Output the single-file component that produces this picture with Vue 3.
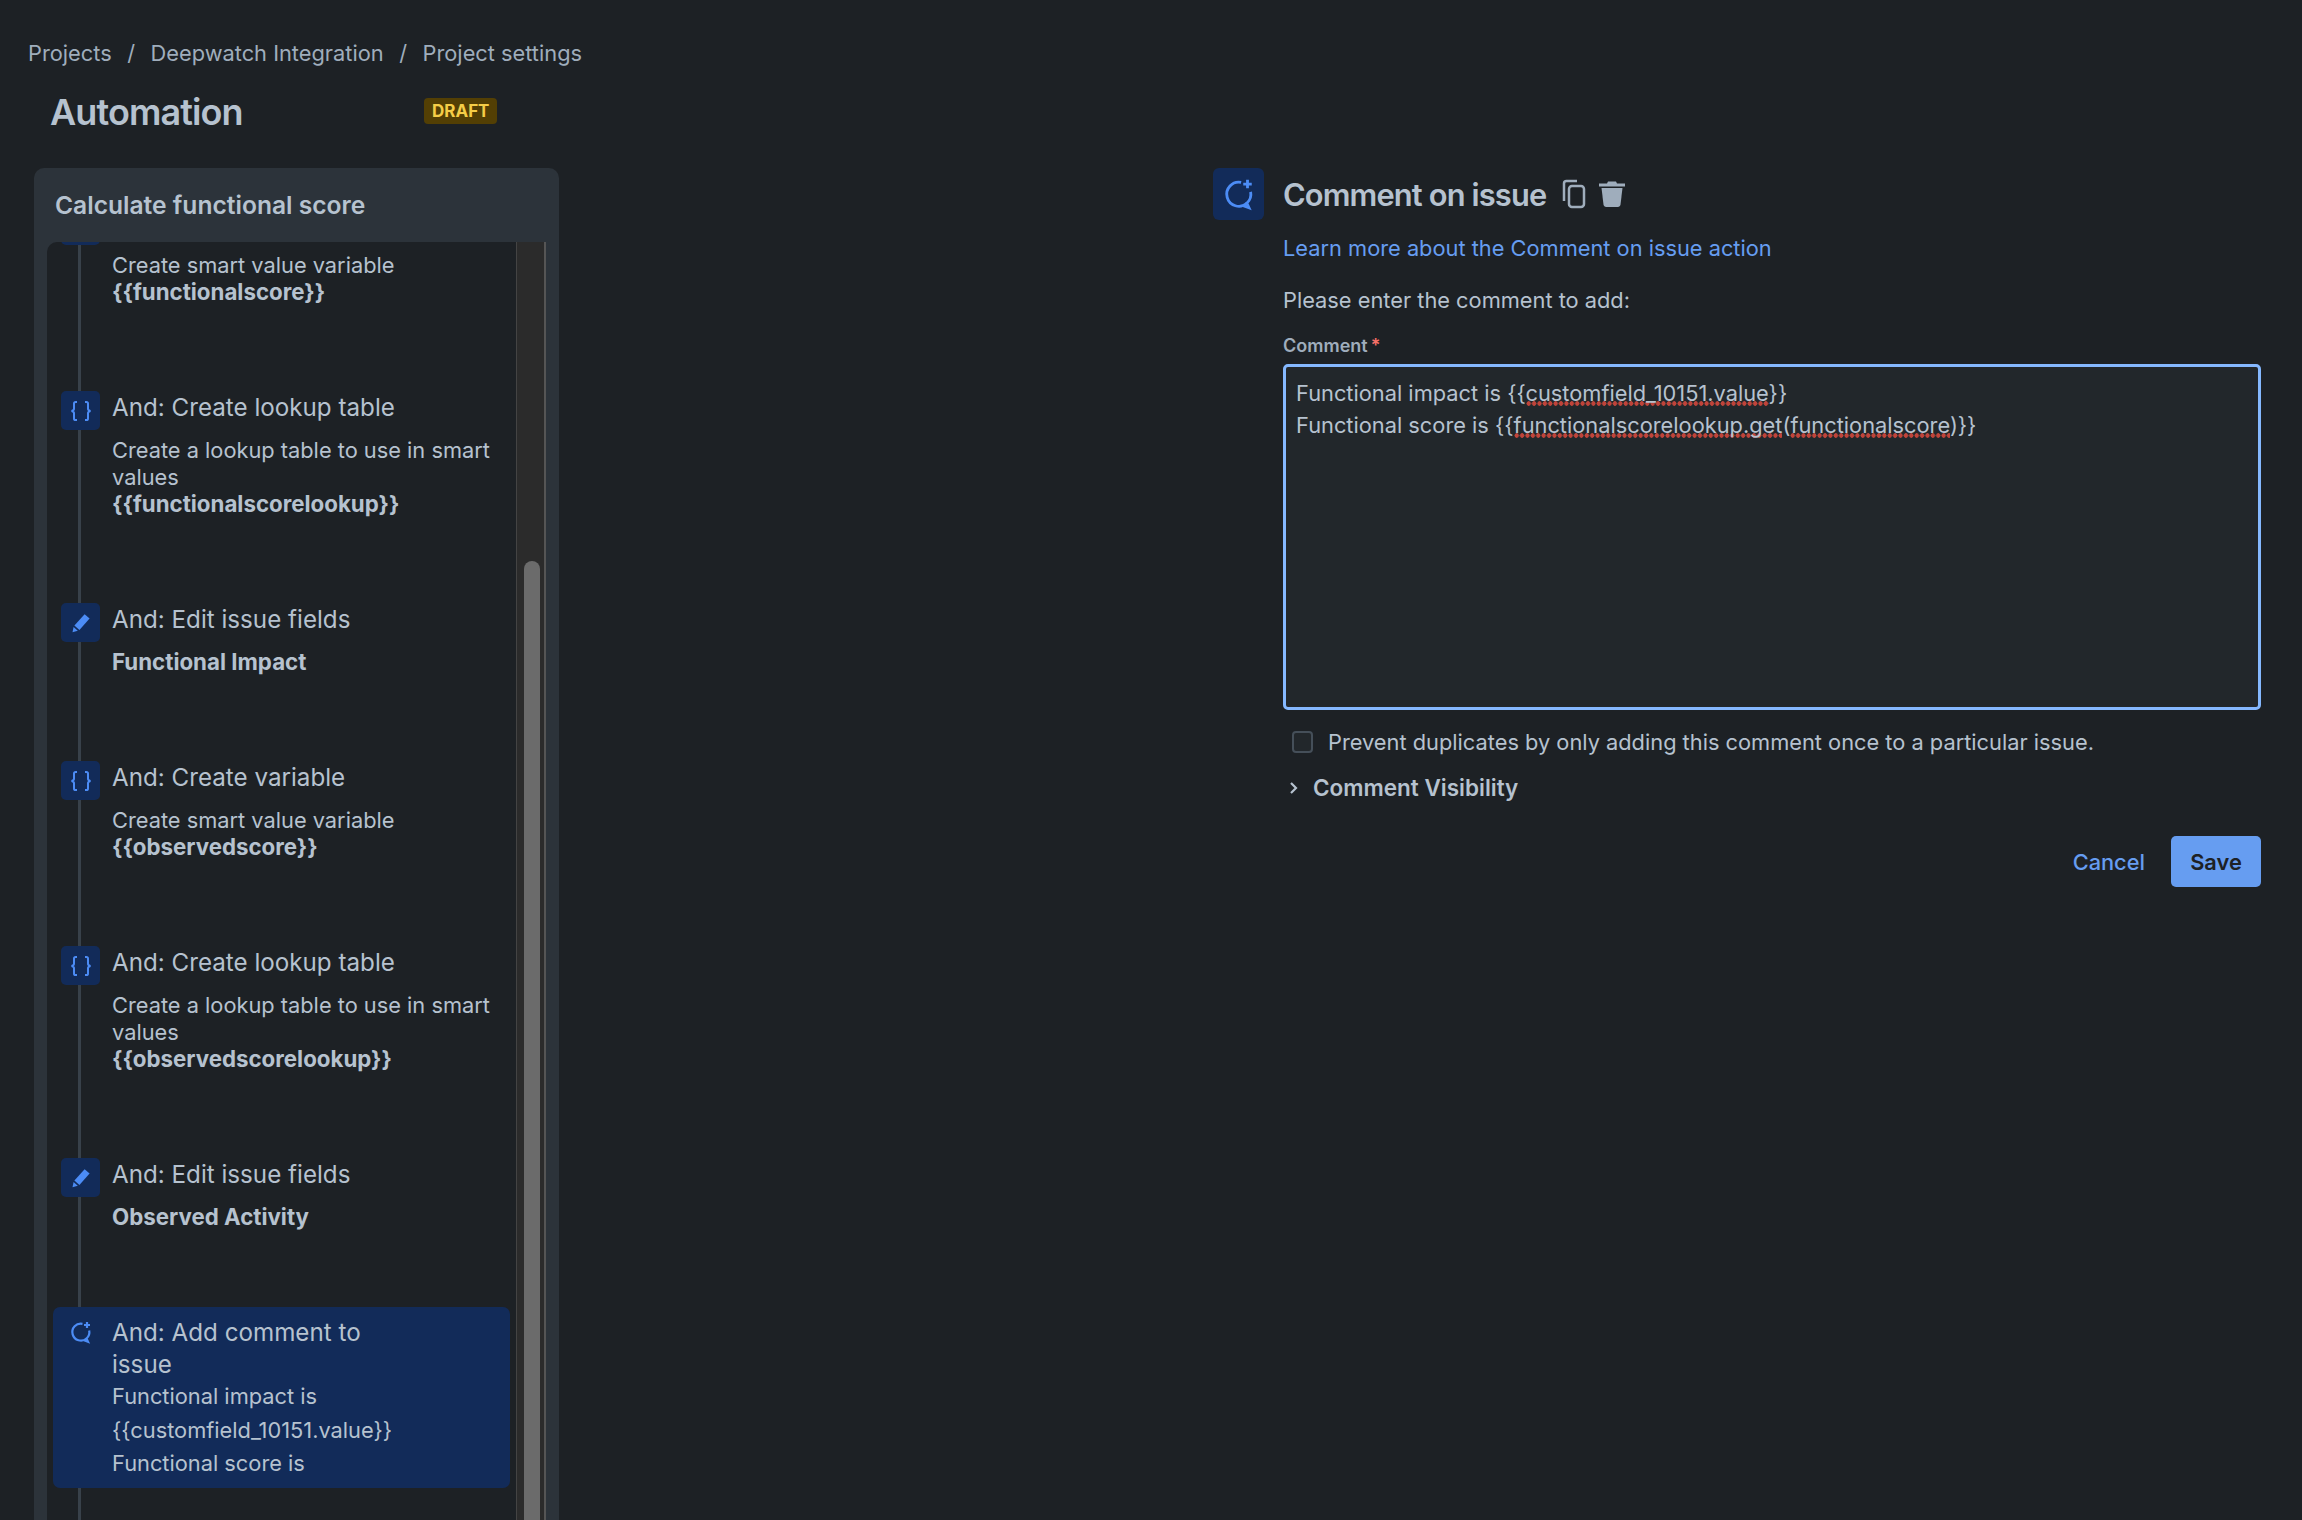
<script setup>
const rows = [
  { id: 'v1', icon: 'braces', title: '', lines: ['Create smart value variable'], bold: '{{functionalscore}}' },
  { id: 'l1', icon: 'braces', title: 'And: Create lookup table', lines: ['Create a lookup table to use in smart', 'values'], bold: '{{functionalscorelookup}}' },
  { id: 'e1', icon: 'pencil', title: 'And: Edit issue fields', lines: [], bold: 'Functional Impact' },
  { id: 'v2', icon: 'braces', title: 'And: Create variable', lines: ['Create smart value variable'], bold: '{{observedscore}}' },
  { id: 'l2', icon: 'braces', title: 'And: Create lookup table', lines: ['Create a lookup table to use in smart', 'values'], bold: '{{observedscorelookup}}' },
  { id: 'e2', icon: 'pencil', title: 'And: Edit issue fields', lines: [], bold: 'Observed Activity' }
]
</script>

<template>
  <div class="page">
    <nav class="crumbs">
      <span>Projects</span><i>/</i><span>Deepwatch Integration</span><i>/</i><span>Project settings</span>
    </nav>
    <header class="head">
      <h1>Automation</h1>
      <span class="lozenge">DRAFT</span>
    </header>
    <main class="main">
      <aside class="panel">
        <h2 class="panel-title">Calculate functional score</h2>
        <div class="panel-body">
          <div class="list">
            <div class="rail"></div>
            <div v-for="r in rows" :key="r.id" class="row">
              <div class="tile">
                <svg v-if="r.icon === 'braces'" width="22" height="22" viewBox="0 0 22 22" fill="none" stroke="#4C8CF5" stroke-width="2">
                  <path d="M7 2H5.600C4.600 2 4 2.600 4 3.600v5.100c0 1.100-.6 1.900-2.500 2.300 1.900.4 2.500 1.200 2.500 2.300v5.100c0 1 .6 1.600 1.600 1.600H7" />
                  <path d="M15 2h1.400c1 0 1.600.6 1.600 1.600v5.100c0 1.100.6 1.900 2.500 2.300-1.900.4-2.500 1.200-2.500 2.300v5.100c0 1-.6 1.600-1.600 1.600H15" />
                </svg>
                <svg v-else width="20" height="20" viewBox="0 0 20 20" fill="#4C8CF5">
                  <path d="M13.600 1.200 18.600 5.600 8.400 17 3.400 12.600Z" />
                  <path d="M2.600 14 6.800 17.800 1.500 19.200Z" />
                </svg>
              </div>
              <div class="text">
                <div class="title">{{ r.title }}</div>
                <div class="desc">
                  <div v-for="l in r.lines" :key="l">{{ l }}</div>
                  <div class="strong">{{ r.bold }}</div>
                </div>
              </div>
            </div>
            <div class="row selected">
              <div class="tile plain">
                <svg width="24" height="24" viewBox="0 0 24 24" fill="none" stroke="#4C8CF5" stroke-width="2.200">
                  <path d="M13.500 3.800A8.500 8.500 0 1 0 17.500 18.500" />
                  <path d="M20.200 10.500a8.500 8.500 0 0 1-2.700 8l1.500 3.200-4-1.500" />
                  <path d="M18 2v6M15 5h6" />
                </svg>
              </div>
              <div class="text">
                <div class="title">And: Add comment to<br />issue</div>
                <div class="desc roomy">
                  <div>Functional impact is</div>
                  <div>&#123;&#123;customfield_10151.value&#125;&#125;</div>
                  <div>Functional score is</div>
                </div>
              </div>
            </div>
            <div class="tail"></div>
          </div>
          <div class="scrollbar"><div class="thumb"></div></div>
        </div>
      </aside>

      <section class="detail">
        <div class="tile big">
          <svg width="34" height="34" viewBox="0 0 24 24" fill="none" stroke="#4C8CF5" stroke-width="2">
            <path d="M13.500 3.800A8.500 8.500 0 1 0 17.500 18.500" />
            <path d="M20.200 10.500a8.500 8.500 0 0 1-2.700 8l1.500 3.200-4-1.500" />
            <path d="M18 2v6M15 5h6" />
          </svg>
        </div>
        <div class="form">
          <div class="form-head">
            <h2>Comment on issue</h2>
            <div class="tools">
              <svg width="24" height="30" viewBox="0 0 24 30" fill="none" stroke="#9FADBC" stroke-width="2.500">
                <path d="M2 22V4.500C2 3 3 2 4.500 2H15" />
                <rect x="7" y="7" width="15" height="21" rx="3" />
              </svg>
              <svg width="28" height="28" viewBox="0 0 28 28" fill="#9FADBC">
                <path d="M10 1.500h8l1 2h8v3H1v-3h8Z" />
                <path d="M3.500 8h21l-2 16.500c-.2 1.500-1.200 2.500-2.700 2.500H8.200c-1.500 0-2.500-1-2.700-2.500Z" />
              </svg>
            </div>
          </div>
          <a class="link">Learn more about the Comment on issue action</a>
          <p class="prompt">Please enter the comment to add:</p>
          <label class="label">Comment<em>*</em></label>
          <div class="area">
            <div>Functional impact is &#123;&#123;<span class="sp">customfield_10151.value</span>&#125;&#125;</div>
            <div>Functional score is &#123;&#123;<span class="sp">functionalscorelookup.get</span>(<span class="sp">functionalscore</span>)&#125;&#125;</div>
          </div>
          <div class="check">
            <span class="box"></span>
            <span>Prevent duplicates by only adding this comment once to a particular issue.</span>
          </div>
          <div class="vis">
            <svg width="12" height="16" viewBox="0 0 12 16" fill="none" stroke="#B6C2CF" stroke-width="2.200">
              <path d="M3 3l5 5-5 5" />
            </svg>
            <span>Comment Visibility</span>
          </div>
          <div class="actions">
            <a class="cancel">Cancel</a>
            <button class="save">Save</button>
          </div>
        </div>
      </section>
    </main>
  </div>
</template>

<style>
html, body { margin: 0; background: #1d2125; }
</style>

<style scoped>
.page {
  width: 2302px;
  height: 1520px;
  overflow: hidden;
  background: #1d2125;
  color: #b6c2cf;
  font-family: Inter, "Liberation Sans", sans-serif;
  font-size: 21.800px;
  display: flex;
  flex-direction: column;
}
.crumbs {
  display: flex;
  gap: 15.500px;
  padding: 39px 0 0 28px;
  line-height: 28px;
  color: #9fadbc;
}
.crumbs i { font-style: normal; color: #9fadbc; }
.head {
  display: flex;
  align-items: center;
  padding: 17px 0 0 50px;
  height: 56px;
}
.head h1 {
  margin: 0;
  width: 374px;
  font-size: 36px;
  line-height: 44px;
  font-weight: 600;
  letter-spacing: -0.9px;
  color: #b6c2cf;
}
.lozenge {
  background: #533f04;
  color: #f5cd47;
  font-size: 17px;
  font-weight: 700;
  line-height: 26px;
  padding: 0 8px;
  margin-top: -2px;
  border-radius: 4px;
}
.main {
  flex: 1;
  min-height: 0;
  display: flex;
  justify-content: space-between;
  padding: 28px 41px 0 34px;
}
.panel {
  width: 525px;
  background: #2c333a;
  border-radius: 10px 10px 0 0;
  display: flex;
  flex-direction: column;
  padding: 0 13px;
  box-sizing: border-box;
}
.panel-title {
  margin: 0 -13px;
  padding: 0 21px;
  height: 74px;
  line-height: 74px;
  font-size: 24.600px;
  font-weight: 600;
  color: #b6c2cf;
}
.panel-body {
  flex: 1;
  min-height: 0;
  display: flex;
  background: #1d2125;
  overflow: hidden;
  border-radius: 10px 0 0 0;
}
.list {
  position: relative;
  flex: 1;
  min-width: 0;
  margin-top: -36px;
}
.rail {
  position: absolute;
  left: 31px;
  top: 0;
  bottom: 0;
  width: 3px;
  background: #38414a;
}
.row {
  position: relative;
  display: flex;
  padding-left: 14px;
  margin-bottom: 86px;
}
.tile {
  flex: none;
  width: 39px;
  height: 39px;
  border-radius: 5px;
  background: #122b59;
  display: flex;
  align-items: center;
  justify-content: center;
  margin-right: 12px;
}
.text { min-width: 0; flex: 1; padding-right: 14px; }
.title {
  margin-top: 1px;
  min-height: 32px;
  font-size: 24.200px;
  line-height: 32px;
}
.desc {
  margin-top: 13px;
  font-size: 21.800px;
  line-height: 27px;
}
.strong { font-weight: 700; font-size: 22.300px; margin-top: -1px; }
.selected {
  margin: -9px 6px 0 6px;
  padding: 9px 0 0 8px;
  height: 181px;
  box-sizing: border-box;
  background: #122b59;
  border-radius: 7px;
}
.selected .tile { background: transparent; height: 32px; }
.roomy { margin-top: -1px; line-height: 33.500px; }
.scrollbar {
  flex: none;
  width: 30px;
  box-sizing: border-box;
  background: #2b2b2b;
  border-left: 1px solid #444;
  border-right: 2px solid #555;
  padding: 319px 4px 0 7px;
}
.thumb {
  height: 100%;
  background: #6b6b6b;
  border-radius: 8px 8px 0 0;
}
.detail {
  width: 1048px;
  display: flex;
  gap: 19px;
  align-items: flex-start;
}
.tile.big {
  width: 51px;
  height: 52px;
  margin: 0;
  border-radius: 6px;
}
.form { flex: 1; min-width: 0; margin-top: -1px; }
.form-head {
  display: flex;
  align-items: center;
  height: 54px;
  gap: 16px;
}
.form-head h2 {
  margin: 0;
  font-size: 30.800px;
  font-weight: 600;
  letter-spacing: -0.85px;
  color: #b6c2cf;
}
.tools { display: flex; align-items: center; gap: 12px; }
.link {
  display: block;
  margin-top: 13px;
  line-height: 28px;
  color: #669df1;
}
.prompt { margin: 24px 0 0; line-height: 28px; }
.label {
  display: block;
  margin-top: 20px;
  font-size: 18px;
  font-weight: 600;
  line-height: 24px;
  color: #9fadbc;
}
.label em { color: #f87168; font-style: normal; margin-left: 3px; }
.area {
  margin-top: 6px;
  height: 346px;
  box-sizing: border-box;
  border: 3px solid #85b8ff;
  border-radius: 5px;
  background: #22272b;
  padding: 10px 10px;
  line-height: 32px;
}
.sp {
  background-image: radial-gradient(circle at center, #c0443a 2px, transparent 2.500px);
  background-size: 5.400px 5px;
  background-repeat: repeat-x;
  background-position: 0 100%;
}
.check {
  display: flex;
  align-items: center;
  gap: 15px;
  margin-top: 21px;
  padding-left: 9px;
  line-height: 22px;
}
.box {
  width: 17px;
  height: 18px;
  border: 2px solid #454f59;
  border-radius: 4px;
  background: #22272b;
}
.vis {
  display: flex;
  align-items: center;
  gap: 13px;
  margin-top: 23px;
  padding-left: 5px;
  font-size: 22.500px;
  font-weight: 600;
  line-height: 24px;
}
.actions {
  display: flex;
  justify-content: flex-end;
  align-items: center;
  gap: 26px;
  margin-top: 36px;
}
.cancel { color: #669df1; font-weight: 500; }
.save {
  width: 90px;
  height: 51px;
  border: 0;
  border-radius: 5px;
  background: #669df1;
  color: #1d2125;
  font: 600 21.800px Inter, "Liberation Sans", sans-serif;
}
</style>
